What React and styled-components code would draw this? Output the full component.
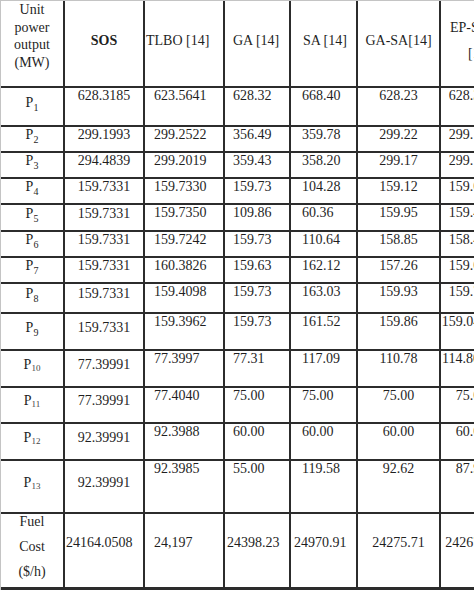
import React from "react";
import styled, { createGlobalStyle } from "styled-components";

const GlobalStyle = createGlobalStyle`
  html, body {
    margin: 0;
    padding: 0;
    background: #ffffff;
    overflow: hidden;
  }
  body {
    width: 474px;
    height: 591px;
  }
`;

const Table = styled.table`
  border-collapse: separate;
  border-spacing: 0;
  table-layout: fixed;
  width: 497px;
  border-top: 1px solid #c4c4c4;
  border-left: 1px solid #c4c4c4;
  font-family: "Liberation Serif", "Times New Roman", serif;
  font-size: 14px;
  color: #1f1f1f;
`;

const Row = styled.tr`
  height: ${(p) => p.$h}px;
`;

const Cell = styled.td`
  box-sizing: border-box;
  padding: 0 0 ${(p) => p.$pb || 0}px ${(p) => p.$pl || 0}px;
  border-right: 2px solid #2c2c2c;
  border-bottom: ${(p) => (p.$last ? 3 : 2)}px solid #2c2c2c;
  text-align: ${(p) => p.$align || "left"};
  vertical-align: ${(p) => p.$valign || "top"};
  line-height: ${(p) => p.$lh || 16}px;
  font-weight: ${(p) => (p.$bold ? 700 : 400)};
  white-space: nowrap;
  overflow: hidden;
`;

const Sub = styled.sub`
  font-size: ${(p) => (p.$small ? 9 : 10)}px;
  line-height: 0;
  vertical-align: ${(p) => (p.$small ? -2 : -4)}px;
  color: ${(p) => (p.$small ? "#444" : "inherit")};
`;

const FuelLabel = styled.div`
  line-height: 25px;
  margin-top: -8px;
`;

const SecondLine = styled.span`
  padding-left: 18px;
`;

// column setup: width, horizontal alignment, left padding
const cols = [
  { w: 64, align: "center" },
  { w: 80, align: "center" },
  { w: 80, align: "left", pl: 9 },
  { w: 66, align: "left", pl: 8 },
  { w: 67, align: "left", pl: 11 },
  { w: 83, align: "center" },
  { w: 56, align: "center" },
];

const rows = [
  { n: 1, h: 39, v: ["628.3185", "623.5641", "628.32", "668.40", "628.23", "628.32"], sosTop: true },
  { n: 2, h: 26, v: ["299.1993", "299.2522", "356.49", "359.78", "299.22", "299.12"] },
  { n: 3, h: 26, v: ["294.4839", "299.2019", "359.43", "358.20", "299.17", "299.17"] },
  { n: 4, h: 26, v: ["159.7331", "159.7330", "159.73", "104.28", "159.12", "159.08"] },
  { n: 5, h: 27, v: ["159.7331", "159.7350", "109.86", "60.36", "159.95", "159.46"] },
  { n: 6, h: 26, v: ["159.7331", "159.7242", "159.73", "110.64", "158.85", "158.48"] },
  { n: 7, h: 26, v: ["159.7331", "160.3826", "159.63", "162.12", "157.26", "159.07"] },
  { n: 8, h: 30, v: ["159.7331", "159.4098", "159.73", "163.03", "159.93", "159.72"] },
  { n: 9, h: 37, v: ["159.7331", "159.3962", "159.73", "161.52", "159.86", "159.0489"] },
  { n: 10, h: 37, v: ["77.39991", "77.3997", "77.31", "117.09", "110.78", "114.8033"] },
  { n: 11, h: 36, v: ["77.39991", "77.4040", "75.00", "75.00", "75.00", "75.0"] },
  { n: 12, h: 37, v: ["92.39991", "92.3988", "60.00", "60.00", "60.00", "60.0"] },
  { n: 13, h: 53, v: ["92.39991", "92.3985", "55.00", "119.58", "92.62", "87.9"] },
];

const fuel = ["24164.0508", "24,197", "24398.23", "24970.91", "24275.71", "24267.4"];
const fuelPad = [1, 9, 2, 3, 0, 0];

function App() {
  return (
    <>
      <GlobalStyle />
      <Table>
        <colgroup>
          {cols.map((c, i) => (
            <col key={i} style={{ width: c.w }} />
          ))}
        </colgroup>
        <tbody>
          <Row $h={87}>
            <Cell $align="center" $lh={17.5}>
              Unit
              <br />
              power
              <br />
              output
              <br />
              (MW)
            </Cell>
            <Cell $align="center" $valign="middle" $pb={6} $bold>
              SOS
            </Cell>
            <Cell $valign="middle" $pb={6} $pl={1}>
              TLBO [14]
            </Cell>
            <Cell $valign="middle" $pb={6} $pl={8}>
              GA [14]
            </Cell>
            <Cell $valign="middle" $pb={6} $pl={12}>
              SA [14]
            </Cell>
            <Cell $align="center" $valign="middle" $pb={6}>
              GA-SA[14]
            </Cell>
            <Cell $valign="middle" $pb={6} $pl={9} $lh={26}>
              EP-SA
              <br />
              <SecondLine>[14]</SecondLine>
            </Cell>
          </Row>
          {rows.map((r) => (
            <Row key={r.n} $h={r.h}>
              <Cell $align="center" $valign="middle" $pb={8}>
                P<Sub $small={r.n > 9}>{r.n}</Sub>
              </Cell>
              {r.v.map((val, i) => {
                const c = cols[i + 1];
                const sos = i === 0;
                return (
                  <Cell
                    key={i}
                    $align={c.align}
                    $pl={c.pl}
                    $valign={sos && !r.sosTop ? "middle" : "top"}
                    $pb={sos && !r.sosTop ? 8 : 0}
                  >
                    {val}
                  </Cell>
                );
              })}
            </Row>
          ))}
          <Row $h={76}>
            <Cell $align="center" $valign="middle" $last>
              <FuelLabel>
                Fuel
                <br />
                Cost
                <br />
                ($/h)
              </FuelLabel>
            </Cell>
            {fuel.map((val, i) => (
              <Cell
                key={i}
                $align={i >= 4 ? "center" : "left"}
                $pl={fuelPad[i]}
                $valign="middle"
                $pb={15}
                $last
              >
                {val}
              </Cell>
            ))}
          </Row>
        </tbody>
      </Table>
    </>
  );
}

export default App;
